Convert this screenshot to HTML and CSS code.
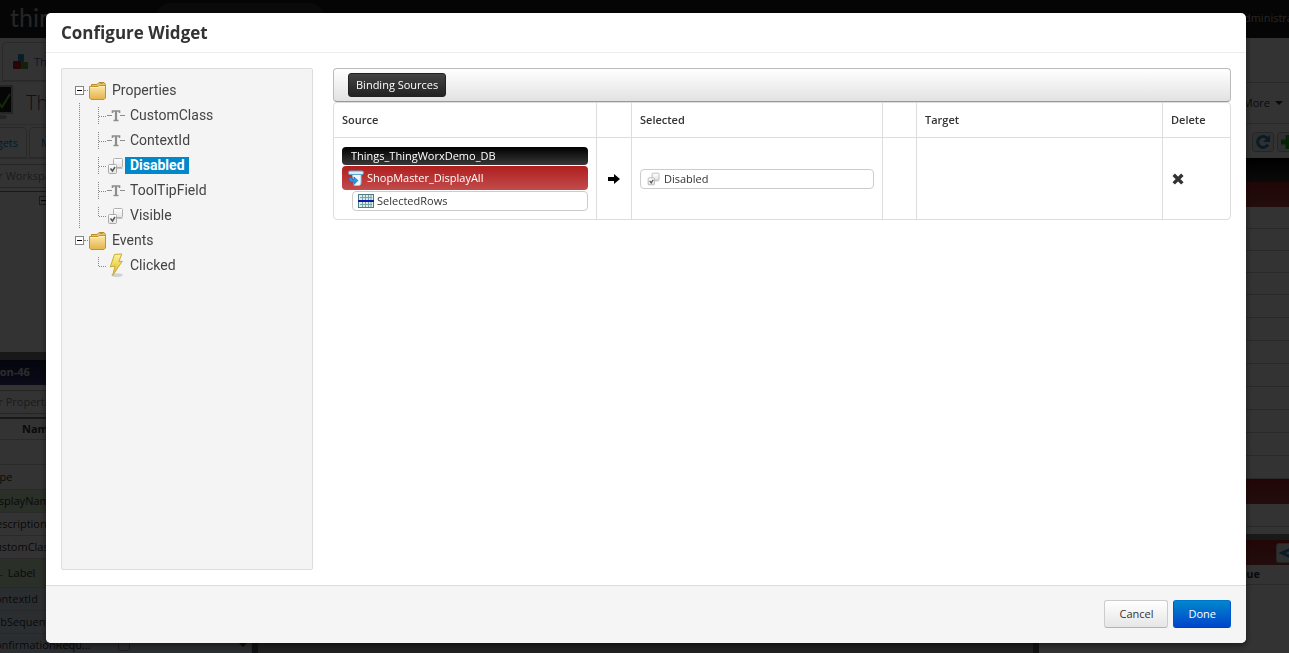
FILE: index.html
```html
<!DOCTYPE html>
<html lang="en">
<head>
  <meta charset="UTF-8">
  <meta name="viewport" content="width=device-width, initial-scale=1.0">
  <title>Configure Widget</title>
  <link rel="stylesheet" href="styles.css">
</head>
<body>

  <!-- Shared icons -->
  <svg class="sprite" aria-hidden="true">
    <defs>
      <linearGradient id="gold" x1="0" y1="0" x2="0" y2="1">
        <stop offset="0" stop-color="#fbe8a8"/><stop offset="1" stop-color="#e3b24a"/>
      </linearGradient>
      <linearGradient id="bolt" x1="0" y1="0" x2="0" y2="1">
        <stop offset="0" stop-color="#fdf49a"/><stop offset="1" stop-color="#dcb61c"/>
      </linearGradient>
      <linearGradient id="paper" x1="0" y1="0" x2="0" y2="1">
        <stop offset="0" stop-color="#fff"/><stop offset="1" stop-color="#e4e4e4"/>
      </linearGradient>
    </defs>
    <symbol id="minus" viewBox="0 0 9 9">
      <rect x=".5" y=".5" width="8" height="8" fill="#fff" stroke="#848484"/>
      <path d="M2 4.500h5" stroke="#000"/>
    </symbol>
    <symbol id="folder" viewBox="0 0 20 20">
      <path d="M3.500 15V3.500H9L11 1.500h5l1.500 2V15z" fill="#e8c468" stroke="#b98a28"/>
      <path d="M12 2.500h3" stroke="#4fb9c9"/>
      <path d="M1.500 5.500H10l1.500-1H17.500V17L16 18.500H3L1.500 17z" fill="url(#gold)" stroke="#c3922c"/>
      <path d="M2.500 6.500h7.500l1.500-1h5" fill="none" stroke="#fff1bd"/>
    </symbol>
    <symbol id="text" viewBox="0 0 18 18">
      <path d="M0 8.500h5M13 8.500h5" stroke="#8d8d8d"/>
      <path d="M5.500 6V4h7v2" fill="none" stroke="#8d8d8d" stroke-width="1.600"/>
      <path d="M9 4v9" stroke="#8d8d8d" stroke-width="2.200"/>
      <path d="M6.500 13.500h5" stroke="#8d8d8d" stroke-width="1.400"/>
    </symbol>
    <symbol id="check" viewBox="0 0 18 18">
      <rect x="6.500" y="1.500" width="9" height="9" rx="1" fill="url(#paper)" stroke="#b0b0b0"/>
      <path d="M6 11.500h9.500" stroke="#c4c4c4"/>
      <rect x="1.500" y="7.500" width="8" height="9" rx="1" fill="url(#paper)" stroke="#aaa"/>
      <path d="M3.500 11.500l2 2.500 2.500-4" fill="none" stroke="#555" stroke-width="1.500"/>
    </symbol>
    <symbol id="lightning" viewBox="0 0 18 26">
      <ellipse cx="10" cy="23" rx="6" ry="2" fill="#d2d2d2"/>
      <path d="M7.500 1.500L15 1l-3 8 3.500-.5L5.500 23.500l2.500-10-5 1z" fill="url(#bolt)" stroke="#c9a92a"/>
    </symbol>
    <symbol id="branch" viewBox="0 0 9 25">
      <path d="M.5 4v18M1 13.500h8" stroke="#888" stroke-dasharray="1 1"/>
    </symbol>
    <symbol id="branch-end" viewBox="0 0 9 25">
      <path d="M.5 4v10M1 13.500h8" stroke="#888" stroke-dasharray="1 1"/>
    </symbol>
    <symbol id="service" viewBox="0 0 16 16">
      <path d="M4.500 4.500h8.500V13q0 2-2 2.500H6z" fill="#eef7fd" stroke="#9cc3da"/>
      <rect x=".5" y="1" width="15" height="3.500" rx="1.500" fill="#d5edfa" stroke="#5fa5cf"/>
      <path d="M1 7.500h3v2h2V7l4 3.500L6 14.500V12H3.500Q1 12 1 9z" fill="#2b97e6" stroke="#0d62ab" stroke-width=".6"/>
    </symbol>
    <symbol id="rows" viewBox="0 0 16 14">
      <rect x=".5" y=".5" width="15" height="13" fill="#dcefe6" stroke="#4c7c84"/>
      <path d="M2 3.500h12M2 10.500h12M4.500 1v12M7.500 1v12M10.500 1v12M13 1v12" stroke="#7ba3a3"/>
      <path d="M0 7h16" stroke="#0a18b8" stroke-width="2"/>
    </symbol>
    <symbol id="arrow" viewBox="0 0 12 10">
      <path d="M0 3h6V0l6 5-6 5V7H0z"/>
    </symbol>
    <symbol id="cross" viewBox="0 0 12 12">
      <path d="M2.500 2.500l8 8M10.500 2.500l-8 8" stroke="#333" stroke-width="3.200"/>
    </symbol>
  </svg>

  <!-- Composer page behind the dialog -->
  <div class="app">
    <header class="topbar">
      <span class="logo">thingworx</span>
      <span class="search"></span>
      <span class="user">Administrator</span>
    </header>
    <div class="columns">
      <div class="left">
        <div class="entity-tab">
          <svg width="16" height="16" viewBox="0 0 16 16">
            <rect x="5" y="0" width="6" height="8" rx="1" fill="#2496c8"/>
            <rect x="0" y="7" width="8" height="8" rx="1" fill="#c8202c"/>
            <rect x="8" y="8" width="7" height="7" rx="1" fill="#5aa72a"/>
          </svg>
          <span>ThingWorx</span>
        </div>
        <div class="entity-title">
          <svg width="36" height="36" viewBox="0 0 36 36">
            <rect x="1" y="1" width="34" height="27" fill="#222" stroke="#bbb" stroke-width="2"/>
            <path d="M4 18h18l3 4 8-13" fill="none" stroke="#6c3" stroke-width="2"/>
            <rect x="12" y="30" width="18" height="4" rx="2" fill="#bbb"/>
          </svg>
          <span>Things</span>
        </div>
        <div class="side-tabs"><span>Widgets</span><span>Mashup</span></div>
        <div class="filter">Filter Workspace</div>
        <div class="workspace"><svg width="9" height="9"><use href="#minus"/></svg></div>
        <div class="panel-title">button-46</div>
        <div class="filter">Filter Properties</div>
        <div class="prop prop-head">Name</div>
        <div class="prop tall"></div>
        <div class="prop tall">Type</div>
        <div class="prop green">DisplayName</div>
        <div class="prop">Description</div>
        <div class="prop">CustomClass</div>
        <div class="prop bound green">← Label</div>
        <div class="prop blue">ContextId</div>
        <div class="prop blue">TabSequence</div>
        <div class="prop blue"><span>ConfirmationRequ...</span><i class="box"></i><i class="caret"></i></div>
      </div>
      <div class="center"></div>
      <div class="right">
        <div class="r-tabs"></div>
        <div class="r-more">More <i class="caret"></i></div>
        <div class="r-tools">
          <span class="tool"><svg width="16" height="16" viewBox="0 0 16 16"><path d="M13 10.500A5.500 5.500 0 1 1 12 4" fill="none" stroke="#2a86c8" stroke-width="3"/><path d="M15 1v7H8z" fill="#2a86c8"/></svg></span>
          <span class="tool"><svg width="16" height="16" viewBox="0 0 16 16"><path d="M8 1v14M1 8h14" stroke="#1faa1f" stroke-width="5"/></svg></span>
        </div>
        <div class="r-dark"></div>
        <div class="r-red"></div>
        <div class="r-row short"></div><div class="r-row short"></div><div class="r-row short"></div><div class="r-row short"></div>
        <div class="r-row"></div><div class="r-row"></div><div class="r-row"></div><div class="r-row"></div>
        <div class="r-row"></div><div class="r-row"></div><div class="r-row"></div><div class="r-row"></div>
        <div class="r-red"></div>
        <div class="r-row"></div>
        <div class="r-gap"></div>
        <div class="r-red r-last"><span class="tool"><svg width="16" height="16" viewBox="0 0 16 16"><path d="M14 3L3 8l11 5" fill="none" stroke="#2a86c8" stroke-width="3"/></svg></span></div>
        <div class="r-value">Value</div>
      </div>
    </div>
  </div>

  <!-- Dialog -->
  <div class="backdrop">
    <div class="modal" role="dialog" aria-labelledby="dialog-title">
      <div class="modal-header"><h3 id="dialog-title">Configure Widget</h3></div>

      <div class="modal-body">
        <div class="tree">
          <div class="node root"><svg width="9" height="9"><use href="#minus"/></svg><i class="dots"></i><svg width="20" height="20"><use href="#folder"/></svg><a href="#">Properties</a></div>
          <ul class="children linked">
            <li class="node"><svg width="9" height="25"><use href="#branch"/></svg><svg width="18" height="18"><use href="#text"/></svg><a href="#">CustomClass</a></li>
            <li class="node"><svg width="9" height="25"><use href="#branch"/></svg><svg width="18" height="18"><use href="#text"/></svg><a href="#">ContextId</a></li>
            <li class="node"><svg width="9" height="25"><use href="#branch"/></svg><svg width="18" height="18"><use href="#check"/></svg><a href="#" class="selected">Disabled</a></li>
            <li class="node"><svg width="9" height="25"><use href="#branch"/></svg><svg width="18" height="18"><use href="#text"/></svg><a href="#">ToolTipField</a></li>
            <li class="node"><svg width="9" height="25"><use href="#branch-end"/></svg><svg width="18" height="18"><use href="#check"/></svg><a href="#">Visible</a></li>
          </ul>
          <div class="node root"><svg width="9" height="9"><use href="#minus"/></svg><i class="dots"></i><svg width="20" height="20"><use href="#folder"/></svg><a href="#">Events</a></div>
          <ul class="children">
            <li class="node"><svg width="9" height="25"><use href="#branch-end"/></svg><svg width="18" height="25"><use href="#lightning"/></svg><a href="#">Clicked</a></li>
          </ul>
        </div>

        <div class="bindings">
          <div class="toolbar"><button type="button" class="btn btn-dark">Binding Sources</button></div>
          <table>
            <colgroup><col class="c-source"><col class="c-arrow"><col class="c-selected"><col class="c-gap"><col class="c-target"><col class="c-delete"></colgroup>
            <thead>
              <tr><th>Source</th><th></th><th>Selected</th><th></th><th>Target</th><th>Delete</th></tr>
            </thead>
            <tbody>
              <tr>
                <td>
                  <div class="bar thing">Things_ThingWorxDemo_DB</div>
                  <div class="bar service"><svg width="16" height="16"><use href="#service"/></svg>ShopMaster_DisplayAll</div>
                  <div class="bar field indent"><svg width="16" height="14"><use href="#rows"/></svg>SelectedRows</div>
                </td>
                <td class="icon"><svg width="12" height="10"><use href="#arrow"/></svg></td>
                <td><div class="bar field"><svg width="14" height="14"><use href="#check"/></svg>Disabled</div></td>
                <td></td>
                <td></td>
                <td><button type="button" class="delete" aria-label="Delete"><svg width="13" height="13"><use href="#cross"/></svg></button></td>
              </tr>
            </tbody>
          </table>
        </div>
      </div>

      <div class="modal-footer">
        <button type="button" class="btn">Cancel</button>
        <button type="button" class="btn btn-primary">Done</button>
      </div>
    </div>
  </div>

</body>
</html>
```

FILE: styles.css
```css
* {
  box-sizing: border-box;
}

body {
  margin: 0;
  height: 100vh;
  overflow: hidden;
  font-family: "Open Sans", "Noto Sans", sans-serif;
  font-size: 11px;
  line-height: 18px;
  color: #333;
}

svg {
  display: block;
  flex: none;
}

.sprite {
  position: absolute;
  width: 0;
  height: 0;
}

/* Page behind */
.app {
  height: 100vh;
  overflow: hidden;
  background: #fff;
}

.topbar {
  display: flex;
  height: 38px;
  background: #1c1c1c;
  color: #bbb;
  padding-left: 10px;
}

.logo {
  width: 147px;
  font-family: Lato, sans-serif;
  font-weight: 400;
  font-size: 25px;
  line-height: 34px;
}

.search {
  width: 166px;
  height: 26px;
  margin-top: 3px;
  border-radius: 13px;
  background: #333;
}

.user {
  margin-left: auto;
  width: 52px;
  line-height: 36px;
  white-space: nowrap;
}

.columns {
  display: flex;
}

.left {
  flex: none;
  width: 276px;
  margin-left: -24px;
  border-right: 1px solid #ccc;
  white-space: nowrap;
}

.entity-tab {
  display: flex;
  align-items: center;
  gap: 5px;
  height: 39px;
  margin: 4px 0 0 26px;
  padding-left: 10px;
  border: 1px solid #ccc;
  border-radius: 4px 4px 0 0;
  color: #46b;
}

.entity-title {
  display: flex;
  align-items: center;
  gap: 13px;
  height: 44px;
  border: 1px solid #ddd;
  color: #555;
  font-size: 20px;
  font-weight: 300;
}

.side-tabs {
  display: flex;
  gap: 2px;
  height: 34px;
  padding-top: 2px;
  border-bottom: 1px solid #ccc;
  color: #08c;
}

.side-tabs span {
  width: 51px;
  padding: 6px 0 0 11px;
  border: 1px solid #ccc;
  border-radius: 4px 4px 0 0;
}

.side-tabs span:first-child {
  padding-left: 0;
}

.filter {
  height: 24px;
  margin: 5px 0 3px;
  border: 1px solid #bbb;
  line-height: 22px;
  color: #888;
}

.workspace {
  height: 161px;
  padding: 4px 0 0 63px;
  border-top: 1px solid #777;
}

.panel-title {
  height: 33px;
  border-top: 8px solid #777;
  background: linear-gradient(#1c1c48, #34347a);
  color: #ddd;
  font-weight: 700;
  line-height: 24px;
}

.prop {
  display: flex;
  align-items: center;
  height: 23px;
  padding-left: 12px;
  border-bottom: 1px solid #ccc;
}

.prop-head {
  padding-left: 46px;
  border-top: 2px solid #777;
  font-weight: 700;
}

.prop.tall {
  height: 25px;
}

.prop.bound {
  height: 29px;
  padding-left: 18px;
}

.prop.green {
  background: #cfe8c8;
}

.prop.blue {
  background: #d8e4f0;
}

.prop span {
  width: 130px;
}

.prop .caret {
  margin-left: auto;
  margin-right: 4px;
}

.box {
  width: 12px;
  height: 12px;
  border: 1px solid #999;
  border-radius: 2px;
}

.center {
  flex: 1;
  height: 615px;
  border-left: 6px solid #555;
  border-right: 6px solid #555;
  background: #a0a0a0;
}

.right {
  flex: none;
  width: 250px;
}

.r-tabs {
  height: 45px;
  border-bottom: 1px solid #ccc;
}

.r-more {
  display: flex;
  align-items: center;
  justify-content: flex-end;
  gap: 5px;
  height: 41px;
  padding-right: 6px;
  border-bottom: 1px solid #ccc;
}

.caret {
  border: 4px solid transparent;
  border-top-color: #333;
  border-bottom: 0;
}

.r-tools {
  display: flex;
  gap: 3px;
  height: 34px;
  padding: 8px 0 0 213px;
}

.tool {
  display: block;
  flex: none;
  width: 22px;
  height: 20px;
  padding: 1px 2px;
  border: 1px solid #bbb;
  border-radius: 3px;
  background: #f0f0f0;
}

.r-dark {
  height: 24px;
  background: linear-gradient(#000, #333);
}

.r-red {
  height: 25px;
  background: linear-gradient(#a82222, #b04040);
}

.r-row {
  height: 23px;
  border-bottom: 1px solid #ccc;
}

.r-row.short {
  height: 22px;
}

.r-gap {
  height: 13px;
  border-bottom: 6px solid #777;
}

.r-last {
  padding: 3px 0 0 237px;
}

.r-value {
  height: 20px;
  padding-left: 190px;
  border-bottom: 1px solid #ccc;
  font-weight: 700;
}

/* Dialog */
.backdrop {
  position: fixed;
  inset: 0;
  display: flex;
  padding: 13px 43px 10px 46px;
  background: rgba(0, 0, 0, 0.8);
}

.modal {
  flex: 1;
  display: flex;
  flex-direction: column;
  border-radius: 5px;
  background: #fff;
  box-shadow: 0 3px 7px rgba(0, 0, 0, 0.5);
  overflow: hidden;
}

.modal-header {
  padding: 5px 15px;
  border-bottom: 1px solid #eee;
}

.modal-header h3 {
  margin: 0;
  font-size: 17px;
  font-weight: 700;
  line-height: 29px;
}

.modal-body {
  flex: 1;
  display: grid;
  grid-template-columns: 252px 1fr;
  gap: 20px;
  padding: 15px;
}

.tree {
  padding: 9px 13px;
  border: 1px solid #ddd;
  border-radius: 2px;
  background: #f4f4f4;
  font-family: Roboto, sans-serif;
  font-size: 14px;
}

.node {
  display: flex;
  align-items: center;
  height: 25px;
}

.node a {
  padding: 0 4px;
  color: #444;
  line-height: 17px;
  text-decoration: none;
}

.children a {
  padding-left: 5px;
}

.node a.selected {
  background: #08c;
  color: #fff;
  font-weight: 700;
}

.dots {
  width: 4px;
  border-top: 1px dotted #888;
}

.children {
  margin: 0 0 0 4px;
  padding: 0 0 0 18px;
  border-left: 1px solid transparent;
  list-style: none;
}

.children.linked {
  border-left: 1px dotted #888;
}

.toolbar {
  height: 34px;
  padding: 4px 14px;
  border: 1px solid #bbb;
  border-bottom-color: #999;
  border-radius: 4px;
  background: linear-gradient(#fff, #e2e2e2);
}

.btn {
  height: 28px;
  padding: 0 14px;
  border: 1px solid #ccc;
  border-bottom-color: #b3b3b3;
  border-radius: 3px;
  background: linear-gradient(#fff, #e6e6e6);
  color: #333;
  font: inherit;
}

.btn-dark {
  height: 24px;
  padding: 0 7px;
  border-color: #222;
  background: linear-gradient(#444, #222);
  color: #fff;
}

.btn-primary {
  border-color: #0074cc #05c #04a;
  background: linear-gradient(#08c, #04c);
  color: #fff;
}

table {
  width: 100%;
  table-layout: fixed;
  border: 1px solid #ddd;
  border-radius: 4px;
  border-spacing: 0;
}

.c-source {
  width: 262px;
}

.c-arrow {
  width: 35px;
}

.c-selected {
  width: 251px;
}

.c-gap {
  width: 34px;
}

.c-delete {
  width: 68px;
}

th,
td {
  padding: 8px;
  text-align: left;
}

th {
  height: 34px;
  font-weight: 600;
}

td {
  height: 82px;
  border-top: 1px solid #ddd;
}

th + th,
td + td {
  border-left: 1px solid #ddd;
}

td.icon {
  padding: 0 11px;
}

.bar {
  display: flex;
  align-items: center;
  border-radius: 4px;
}

.thing {
  height: 18px;
  padding-left: 9px;
  background: linear-gradient(#000, #383838);
  color: #fff;
}

.service {
  gap: 3px;
  height: 24px;
  margin: 1px 0;
  padding-left: 6px;
  background: linear-gradient(#b01e1e, #c24c4c);
  color: #fff;
}

.field {
  gap: 3px;
  height: 20px;
  padding-left: 6px;
  border: 1px solid #ccc;
}

.indent {
  margin-left: 10px;
  padding-left: 5px;
}

.delete {
  display: block;
  padding: 0;
  border: 0;
  background: none;
}

.modal-footer {
  display: flex;
  justify-content: flex-end;
  gap: 5px;
  padding: 14px 15px 15px;
  border-top: 1px solid #ddd;
  background: #f5f5f5;
}
```
